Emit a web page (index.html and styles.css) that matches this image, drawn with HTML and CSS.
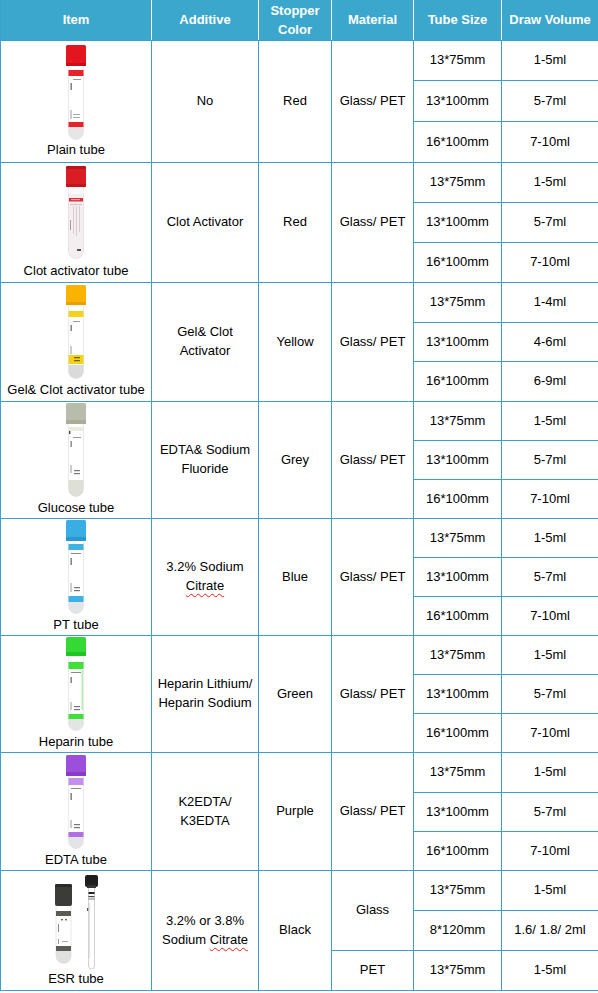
FILE: index.html
```
<!DOCTYPE html>
<html>
<head>
<meta charset="utf-8">
<title>Blood collection tubes</title>
<link rel="stylesheet" href="styles.css">
</head>
<body>
<table class="spec">
  <colgroup>
    <col class="c-item"><col class="c-add"><col class="c-stop"><col class="c-mat"><col class="c-size"><col class="c-vol">
  </colgroup>
  <thead>
    <tr class="head">
      <th>Item</th><th>Additive</th><th>Stopper Color</th><th>Material</th><th>Tube Size</th><th>Draw Volume</th>
    </tr>
  </thead>
  <tbody>
    <tr class="r40">
      <td class="item" rowspan="3">
        <div class="pic">
          <svg class="tube" viewBox="0 0 22 96" width="22" height="96">
            <path d="M3.5 21 H18.5 V88 a7.5 7.5 0 0 1 -15 0 Z" fill="#fff" stroke="#dcdcdc" stroke-width=".6"/>
            <path d="M3.5 83 H18.5 V88 a7.5 7.5 0 0 1 -15 0 Z" fill="#e4e6e8"/>
            <rect x="3.5" y="26" width="15" height="6" fill="#e8212b"/>
            <rect x="3.5" y="78" width="15" height="5" fill="#e8212b"/>
            <rect x="8" y="35" width="8" height="1" fill="#9a9a9a"/>
            <rect x="5.5" y="39" width="1.3" height="7" fill="#6d6d6d"/>
            <rect x="5.5" y="66" width="1" height="9" fill="#9a9a9a"/>
            <rect x="8" y="70" width="7" height="1" fill="#aaa"/>
            <rect x="8" y="73" width="7" height="1" fill="#aaa"/>
            <rect x="1" y="1" width="20" height="21" rx="1.5" fill="#e3161f"/>
            <rect x="1" y="19" width="20" height="3" fill="#c80f18"/>
          </svg>
        </div>
        <div class="cap">Plain tube</div>
      </td>
      <td rowspan="3">No</td>
      <td rowspan="3">Red</td>
      <td rowspan="3">Glass/ PET</td>
      <td>13*75mm</td><td>1-5ml</td>
    </tr>
    <tr class="r41"><td>13*100mm</td><td>5-7ml</td></tr>
    <tr class="r41"><td>16*100mm</td><td>7-10ml</td></tr>

    <tr class="r40">
      <td class="item" rowspan="3">
        <div class="pic">
          <svg class="tube" viewBox="0 0 22 96" width="22" height="96">
            <path d="M3.5 21 H18.5 V86 a7.5 7.5 0 0 1 -15 0 Z" fill="#f5eef0" stroke="#dcd4d6" stroke-width=".6"/>
            <rect x="3.5" y="23" width="15" height="6" fill="#fbf8f9"/>
            <rect x="4" y="33" width="14" height="3.5" fill="#d9323a"/>
            <rect x="6" y="34.3" width="9" height=".8" fill="#f6c9cb"/>
            <rect x="5" y="39" width="12" height=".6" fill="#b5a9ac"/>
            <rect x="8" y="41" width=".6" height="28" fill="#c3b8bb"/>
            <rect x="11" y="41" width=".6" height="30" fill="#c3b8bb"/>
            <rect x="14" y="41" width=".6" height="26" fill="#c3b8bb"/>
            <rect x="5" y="55" width="1" height="10" fill="#a89c9f"/>
            <rect x="12" y="84" width="4" height="2" fill="#555"/>
            <rect x="1" y="1" width="20" height="21" rx="1.5" fill="#d81d24"/>
            <rect x="1" y="1" width="20" height="3" rx="1.5" fill="#b9151b"/>
            <rect x="1" y="19" width="20" height="3" fill="#c0161d"/>
          </svg>
        </div>
        <div class="cap">Clot activator tube</div>
      </td>
      <td rowspan="3">Clot Activator</td>
      <td rowspan="3">Red</td>
      <td rowspan="3">Glass/ PET</td>
      <td>13*75mm</td><td>1-5ml</td>
    </tr>
    <tr class="r40"><td>13*100mm</td><td>5-7ml</td></tr>
    <tr class="r40"><td>16*100mm</td><td>7-10ml</td></tr>

    <tr class="r40">
      <td class="item" rowspan="3">
        <div class="pic">
          <svg class="tube" viewBox="0 0 22 96" width="22" height="96">
            <path d="M3.5 21 H18.5 V87 a7.5 7.5 0 0 1 -15 0 Z" fill="#fff" stroke="#dcdcdc" stroke-width=".6"/>
            <path d="M3.5 81 H18.5 V87 a7.5 7.5 0 0 1 -15 0 Z" fill="#d9dbd8"/>
            <rect x="3.5" y="27" width="15" height="6" fill="#f4d21a"/>
            <rect x="3.5" y="71" width="15" height="9" fill="#f4d21a"/>
            <rect x="8" y="37" width="7" height="1" fill="#9a9a9a"/>
            <rect x="5.5" y="41" width="1.3" height="6" fill="#6d6d6d"/>
            <rect x="5.5" y="62" width="1" height="8" fill="#9a9a9a"/>
            <rect x="9" y="73" width="6" height="1.2" fill="#6b5c10"/>
            <rect x="9" y="76" width="6" height="1.2" fill="#6b5c10"/>
            <rect x="1" y="1" width="20" height="20" rx="1.5" fill="#f9b300"/>
            <rect x="1" y="18" width="20" height="3" fill="#e9a000"/>
          </svg>
        </div>
        <div class="cap">Gel&amp; Clot activator tube</div>
      </td>
      <td rowspan="3">Gel&amp; Clot Activator</td>
      <td rowspan="3">Yellow</td>
      <td rowspan="3">Glass/ PET</td>
      <td>13*75mm</td><td>1-4ml</td>
    </tr>
    <tr class="r39"><td>13*100mm</td><td>4-6ml</td></tr>
    <tr class="r40"><td>16*100mm</td><td>6-9ml</td></tr>

    <tr class="r39">
      <td class="item" rowspan="3">
        <div class="pic">
          <svg class="tube" viewBox="0 0 22 96" width="22" height="96">
            <path d="M3.5 21 H18.5 V87 a7.5 7.5 0 0 1 -15 0 Z" fill="#fff" stroke="#dcdcdc" stroke-width=".6"/>
            <path d="M3.5 78 H18.5 V87 a7.5 7.5 0 0 1 -15 0 Z" fill="#dedfd6"/>
            <rect x="3.5" y="25" width="15" height="4" fill="#ecebdf"/>
            <rect x="4" y="29" width="1.4" height="3" fill="#444"/>
            <rect x="8" y="35" width="8" height="1" fill="#9a9a9a"/>
            <rect x="5.5" y="39" width="1.3" height="6" fill="#7a7a7a"/>
            <rect x="5.5" y="63" width="1" height="8" fill="#9a9a9a"/>
            <rect x="9" y="68" width="6" height="1.2" fill="#777"/>
            <rect x="9" y="71" width="6" height="1.2" fill="#777"/>
            <rect x="1" y="1" width="20" height="21" rx="1.5" fill="#b8bdab"/>
            <rect x="1" y="18" width="20" height="4" fill="#a7ad99"/>
          </svg>
        </div>
        <div class="cap">Glucose tube</div>
      </td>
      <td rowspan="3">EDTA&amp; Sodium Fluoride</td>
      <td rowspan="3">Grey</td>
      <td rowspan="3">Glass/ PET</td>
      <td>13*75mm</td><td>1-5ml</td>
    </tr>
    <tr class="r39"><td>13*100mm</td><td>5-7ml</td></tr>
    <tr class="r39"><td>16*100mm</td><td>7-10ml</td></tr>

    <tr class="r39">
      <td class="item" rowspan="3">
        <div class="pic">
          <svg class="tube" viewBox="0 0 22 96" width="22" height="96">
            <path d="M3.5 21 H18.5 V87 a7.5 7.5 0 0 1 -15 0 Z" fill="#fff" stroke="#dcdcdc" stroke-width=".6"/>
            <path d="M3.5 83 H18.5 V87 a7.5 7.5 0 0 1 -15 0 Z" fill="#e2e4e6"/>
            <rect x="3.5" y="25" width="15" height="6" fill="#3fb2e4"/>
            <rect x="3.5" y="77" width="15" height="6" fill="#3fb2e4"/>
            <rect x="6" y="34" width="10" height="1" fill="#8a8a8a"/>
            <rect x="5.5" y="39" width="1.3" height="7" fill="#6d6d6d"/>
            <rect x="5.5" y="64" width="1" height="9" fill="#9a9a9a"/>
            <rect x="9" y="68" width="6" height="1.2" fill="#777"/>
            <rect x="9" y="71" width="6" height="1.2" fill="#777"/>
            <rect x="1" y="1" width="20" height="21" rx="1.5" fill="#3aaee4"/>
            <rect x="1" y="18" width="20" height="4" fill="#2a98cf"/>
          </svg>
        </div>
        <div class="cap">PT tube</div>
      </td>
      <td rowspan="3">3.2% Sodium <span class="sp">Citrate</span></td>
      <td rowspan="3">Blue</td>
      <td rowspan="3">Glass/ PET</td>
      <td>13*75mm</td><td>1-5ml</td>
    </tr>
    <tr class="r39"><td>13*100mm</td><td>5-7ml</td></tr>
    <tr class="r39"><td>16*100mm</td><td>7-10ml</td></tr>

    <tr class="r39">
      <td class="item" rowspan="3">
        <div class="pic">
          <svg class="tube" viewBox="0 0 22 96" width="22" height="96">
            <path d="M3.5 20 H18.5 V87 a7.5 7.5 0 0 1 -15 0 Z" fill="#fff" stroke="#dcdcdc" stroke-width=".6"/>
            <path d="M3.5 83 H18.5 V87 a7.5 7.5 0 0 1 -15 0 Z" fill="#e2e4e6"/>
            <rect x="3.5" y="26" width="15" height="7" fill="#3fe03a"/>
            <rect x="3.5" y="78" width="15" height="5" fill="#3fe03a"/>
            <rect x="16.5" y="34" width="1.5" height="40" fill="#b8f0b4"/>
            <rect x="6" y="36" width="10" height="1" fill="#8a8a8a"/>
            <rect x="5.5" y="41" width="1.3" height="6" fill="#6d6d6d"/>
            <rect x="5.5" y="66" width="1" height="8" fill="#9a9a9a"/>
            <rect x="9" y="70" width="6" height="1.2" fill="#777"/>
            <rect x="9" y="73" width="6" height="1.2" fill="#777"/>
            <rect x="1" y="1" width="20" height="19" rx="1.5" fill="#35d835"/>
            <rect x="1" y="16" width="20" height="4" fill="#23c225"/>
          </svg>
        </div>
        <div class="cap">Heparin tube</div>
      </td>
      <td rowspan="3">Heparin Lithium/ Heparin Sodium</td>
      <td rowspan="3">Green</td>
      <td rowspan="3">Glass/ PET</td>
      <td>13*75mm</td><td>1-5ml</td>
    </tr>
    <tr class="r39"><td>13*100mm</td><td>5-7ml</td></tr>
    <tr class="r39"><td>16*100mm</td><td>7-10ml</td></tr>

    <tr class="r40">
      <td class="item" rowspan="3">
        <div class="pic">
          <svg class="tube" viewBox="0 0 22 96" width="22" height="96">
            <path d="M3.5 21 H18.5 V87 a7.5 7.5 0 0 1 -15 0 Z" fill="#fff" stroke="#dcdcdc" stroke-width=".6"/>
            <path d="M3.5 83 H18.5 V87 a7.5 7.5 0 0 1 -15 0 Z" fill="#e2e4e6"/>
            <rect x="3.5" y="24" width="15" height="7" fill="#c58fec"/>
            <rect x="3.5" y="78" width="15" height="5" fill="#b070e4"/>
            <rect x="6" y="34" width="10" height="1" fill="#8a8a8a"/>
            <rect x="5.5" y="39" width="1.3" height="7" fill="#6d6d6d"/>
            <rect x="5.5" y="66" width="1" height="8" fill="#9a9a9a"/>
            <rect x="9" y="70" width="6" height="1.2" fill="#777"/>
            <rect x="9" y="73" width="6" height="1.2" fill="#777"/>
            <rect x="1" y="1" width="20" height="21" rx="1.5" fill="#9c4fdb"/>
            <rect x="1" y="18" width="20" height="4" fill="#8a3cc9"/>
          </svg>
        </div>
        <div class="cap">EDTA tube</div>
      </td>
      <td rowspan="3">K2EDTA/ K3EDTA</td>
      <td rowspan="3">Purple</td>
      <td rowspan="3">Glass/ PET</td>
      <td>13*75mm</td><td>1-5ml</td>
    </tr>
    <tr class="r39"><td>13*100mm</td><td>5-7ml</td></tr>
    <tr class="r39"><td>16*100mm</td><td>7-10ml</td></tr>

    <tr class="r40">
      <td class="item" rowspan="3">
        <div class="pic esr">
          <svg class="tube-short" viewBox="0 0 17 80" width="17" height="80">
            <path d="M1 20 H16 V72 a7.5 7.5 0 0 1 -15 0 Z" fill="#fff" stroke="#d6d6d6" stroke-width=".6"/>
            <path d="M1 67 H16 V72 a7.5 7.5 0 0 1 -15 0 Z" fill="#e0e0de"/>
            <rect x="1" y="27" width="15" height="5" fill="#5b5b56"/>
            <rect x="1" y="62" width="15" height="5" fill="#5b5b56"/>
            <rect x="6" y="35" width="2" height="1.4" fill="#666"/>
            <rect x="10" y="35" width="2" height="1.4" fill="#666"/>
            <rect x="3" y="40" width="1" height="8" fill="#888"/>
            <rect x="3" y="55" width="1" height="5" fill="#999"/>
            <rect x="7" y="57" width="6" height="1" fill="#aaa"/>
            <rect x="0" y="0" width="17" height="22" rx="2" fill="#3b3b37"/>
            <rect x="0" y="0" width="17" height="3" rx="1.5" fill="#2a2a27"/>
          </svg>
          <svg class="tube-thin" viewBox="0 0 15 94" width="15" height="94">
            <path d="M4.5 12 H10.5 V91 a3 3 0 0 1 -6 0 Z" fill="#fff" stroke="#bdbdbd" stroke-width=".7"/>
            <rect x="4.5" y="17" width="6" height="2" fill="#222"/>
            <rect x="4.5" y="21" width="6" height="1.2" fill="#444"/>
            <rect x="4.5" y="23.5" width="6" height="1" fill="#777"/>
            <rect x="5.5" y="28" width=".6" height="55" fill="#c9c9c9"/>
            <rect x="3" y="33" width="1.2" height="3" fill="#555"/>
            <rect x="1" y="0" width="13" height="12" rx="2" fill="#1e1e1e"/>
            <rect x="3" y="10" width="9" height="3" fill="#333"/>
          </svg>
        </div>
        <div class="cap">ESR tube</div>
      </td>
      <td rowspan="3">3.2% or 3.8% Sodium <span class="sp">Citrate</span></td>
      <td rowspan="3">Black</td>
      <td rowspan="2">Glass</td>
      <td>13*75mm</td><td>1-5ml</td>
    </tr>
    <tr class="r40"><td>8*120mm</td><td>1.6/ 1.8/ 2ml</td></tr>
    <tr class="r40"><td>PET</td><td>13*75mm</td><td>1-5ml</td></tr>
  </tbody>
</table>
</body>
</html>
```

FILE: styles.css
```
html, body {
  margin: 0;
  padding: 0;
  background: #fff;
}

body {
  font-family: "Liberation Sans", Arial, sans-serif;
  font-size: 13px;
  color: #000;
}

.spec {
  border-collapse: collapse;
  table-layout: fixed;
  width: 598px;
}

.c-item { width: 151px; }
.c-add  { width: 107px; }
.c-stop { width: 73px; }
.c-mat  { width: 82px; }
.c-size { width: 88px; }
.c-vol  { width: 97px; }

.spec th,
.spec td {
  border: 1px solid #3aa2ca;
  padding: 0 4px;
  text-align: center;
  vertical-align: middle;
  line-height: 18.7px;
}

.head {
  height: 40px;
}

.spec th {
  background: #3ba7cd;
  color: #fff;
  font-weight: bold;
  border-color: #fff;
  border-top-color: #3ba7cd;
  border-bottom-color: #3aa2ca;
  line-height: 18.5px;
}

.spec th:first-child {
  border-left-color: #3aa2ca;
}

.spec th:last-child {
  border-right-color: #3ba7cd;
}

.r39 { height: 39px; }
.r40 { height: 40px; }
.r41 { height: 41px; }

.spec td.item {
  padding: 0;
}

.pic {
  display: flex;
  justify-content: center;
  align-items: flex-end;
  height: 94px;
}

.pic svg {
  display: block;
}

.pic.esr {
  gap: 12px;
  margin-left: 2px;
}

.tube-short {
  margin-bottom: 5px;
}

.cap {
  line-height: 16px;
  margin-top: 2px;
}

.sp {
  text-decoration: underline wavy #e0201c;
  text-decoration-thickness: 1px;
  text-underline-offset: 3px;
}
```
